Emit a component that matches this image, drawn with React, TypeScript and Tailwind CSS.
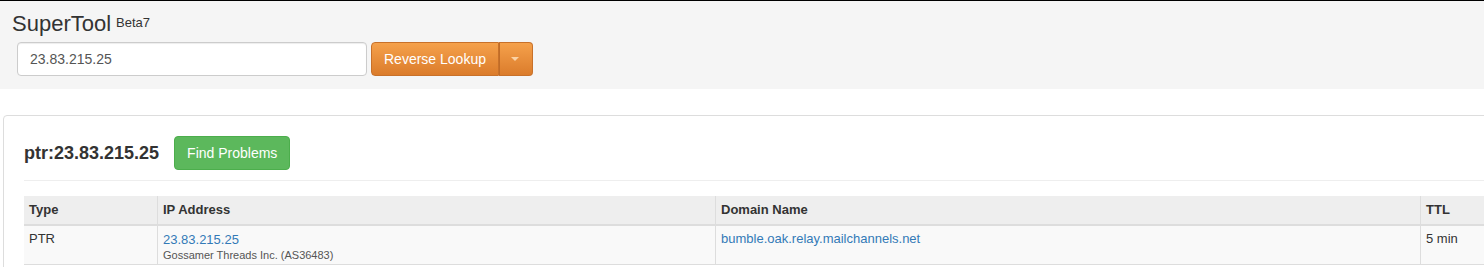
export default function App() {
  return (
    <div className="w-full overflow-hidden bg-white min-h-[267px] font-['Liberation_Sans',Arial,sans-serif] text-[#333]">
      <div className="h-[89px] border-t border-black bg-[#f5f5f5] px-[12px] pt-[10px]">
        <div className="text-[22px] leading-[24px] text-[#333] whitespace-nowrap">
          SuperTool
          <span className="ml-[5px] text-[13px] align-[4px]">Beta7</span>
        </div>
        <div className="mt-[6px] flex pl-[5px]">
          <input
            readOnly
            defaultValue="23.83.215.25"
            className="h-[34px] w-[350px] rounded-[4px] border border-[#ccc] bg-white px-[12px] text-[14px] text-[#555] shadow-[inset_0_1px_1px_rgba(0,0,0,0.075)] outline-none"
          />
          <div className="ml-[4px] flex h-[34px]">
            <button className="h-[34px] rounded-l-[4px] border border-[#c8712a] bg-linear-to-b from-[#f5a14b] to-[#db7c2b] px-[12px] text-[14px] leading-[20px] text-white">
              Reverse Lookup
            </button>
            <button className="flex h-[34px] w-[34px] items-center justify-center rounded-r-[4px] border border-l-0 border-[#c8712a] bg-linear-to-b from-[#f5a14b] to-[#db7c2b] shadow-[inset_1px_0_0_#bf6b27]">
              <span className="h-0 w-0 border-x-[4px] border-t-[4px] border-x-transparent border-t-[#fbd2a4]" />
            </button>
          </div>
        </div>
      </div>

      <div className="ml-[3px] mt-[26px] w-[1528px] rounded-[4px] border border-[#ddd] px-[20px] pb-[20px] pt-[20px]">
        <div className="flex items-center gap-[15px] border-b border-[#eee] pb-[10px]">
          <div className="text-[18px] font-bold leading-[20px] text-[#333]">ptr:23.83.215.25</div>
          <button className="h-[34px] rounded-[4px] border border-[#4cae4c] bg-[#5cb85c] px-[12px] text-[14px] leading-[20px] text-white">
            Find Problems
          </button>
        </div>

        <div className="mt-[15px] w-[1486px]">
          <div className="grid grid-cols-[133px_558px_705px_90px] border-b-2 border-[#ddd] bg-[#eee] text-[13px] font-bold leading-[20px]">
            <div className="px-[5px] py-[4px]">Type</div>
            <div className="border-l border-[#ddd] px-[5px] py-[4px]">IP Address</div>
            <div className="border-l border-[#ddd] px-[5px] py-[4px]">Domain Name</div>
            <div className="border-l border-[#ddd] px-[5px] py-[4px]">TTL</div>
          </div>
          <div className="grid h-[39px] grid-cols-[133px_558px_705px_90px] border-b border-[#ddd] bg-[#f9f9f9] text-[13px] leading-[18px]">
            <div className="px-[5px] pt-[4px]">PTR</div>
            <div className="border-l border-[#ddd] px-[5px] pt-[5px]">
              <div className="text-[13px] leading-[18px] text-[#337ab7]">23.83.215.25</div>
              <div className="text-[11px] leading-[12px] text-[#555]">Gossamer Threads Inc. (AS36483)</div>
            </div>
            <div className="border-l border-[#ddd] px-[5px] pt-[4px] text-[#337ab7]">bumble.oak.relay.mailchannels.net</div>
            <div className="border-l border-[#ddd] px-[5px] pt-[4px]">5 min</div>
          </div>
        </div>
      </div>
    </div>
  );
}
